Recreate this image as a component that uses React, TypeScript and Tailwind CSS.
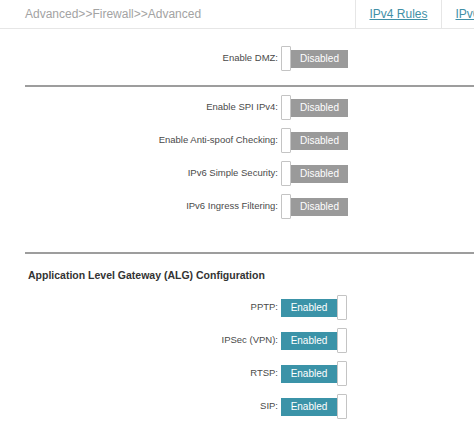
const FONT = { fontFamily: '"Liberation Sans", Arial, sans-serif' };

const firewallRows = [
  'Enable SPI IPv4:',
  'Enable Anti-spoof Checking:',
  'IPv6 Simple Security:',
  'IPv6 Ingress Filtering:',
];
const algRows = ['PPTP:', 'IPSec (VPN):', 'RTSP:', 'SIP:'];

function Knob() {
  return <span className="h-[25px] w-[10px] shrink-0 rounded-[1px] border border-[#c4c4c4] bg-white" />;
}

function Toggle({ on }: { on: boolean }) {
  return (
    <div className="flex w-[67px] items-center">
      {!on && <Knob />}
      <span
        className={
          on
            ? 'flex h-[18px] w-[56px] items-center justify-center bg-[#3b93a8] text-[10px] text-white'
            : 'flex h-[18px] w-[57px] items-center justify-center bg-[#9a9a9a] text-[10px] text-white'
        }
      >
        {on ? 'Enabled' : 'Disabled'}
      </span>
      {on && <Knob />}
    </div>
  );
}

function Row({ label, on }: { label: string; on: boolean }) {
  return (
    <div className="flex h-[33px] items-center">
      <span className="w-[279px] pr-[1px] text-right text-[9.5px] text-[#4a4a4a]">{label}</span>
      <span className="w-[2px]" />
      <Toggle on={on} />
    </div>
  );
}

export default function App() {
  return (
    <div className="h-[439px] w-[474px] overflow-hidden bg-white" style={FONT}>
      <header className="flex h-[29px] items-stretch border-b border-[#e6e6e6]">
        <div className="flex w-[355px] shrink-0 items-center pl-[25px] text-[12px] text-[#a3a3a3]">
          Advanced&gt;&gt;Firewall&gt;&gt;Advanced
        </div>
        <div className="flex w-[86px] shrink-0 items-center justify-center border-l border-[#e6e6e6]">
          <a className="text-[12px] text-[#3f8fa6] underline">IPv4 Rules</a>
        </div>
        <div className="flex w-[86px] shrink-0 items-center justify-center border-l border-[#e6e6e6]">
          <a className="whitespace-nowrap text-[12px] text-[#3f8fa6] underline">IPv6 Rules</a>
        </div>
      </header>

      <div className="mt-[13px]">
        <Row label="Enable DMZ:" on={false} />
      </div>
      <hr className="ml-[25px] mt-[10px] border-0 border-t-2 border-[#9d9d9d]" />

      <div className="mt-[4px]">
        {firewallRows.map((label) => (
          <Row key={label} label={label} on={false} />
        ))}
      </div>
      <hr className="ml-[25px] mt-[29px] border-0 border-t-2 border-[#9d9d9d]" />

      <h2 className="mt-[14px] pl-[28px] text-[10.5px] leading-[14px] font-bold text-[#333]">
        Application Level Gateway (ALG) Configuration
      </h2>
      <div className="mt-[9px]">
        {algRows.map((label) => (
          <Row key={label} label={label} on />
        ))}
      </div>
    </div>
  );
}
